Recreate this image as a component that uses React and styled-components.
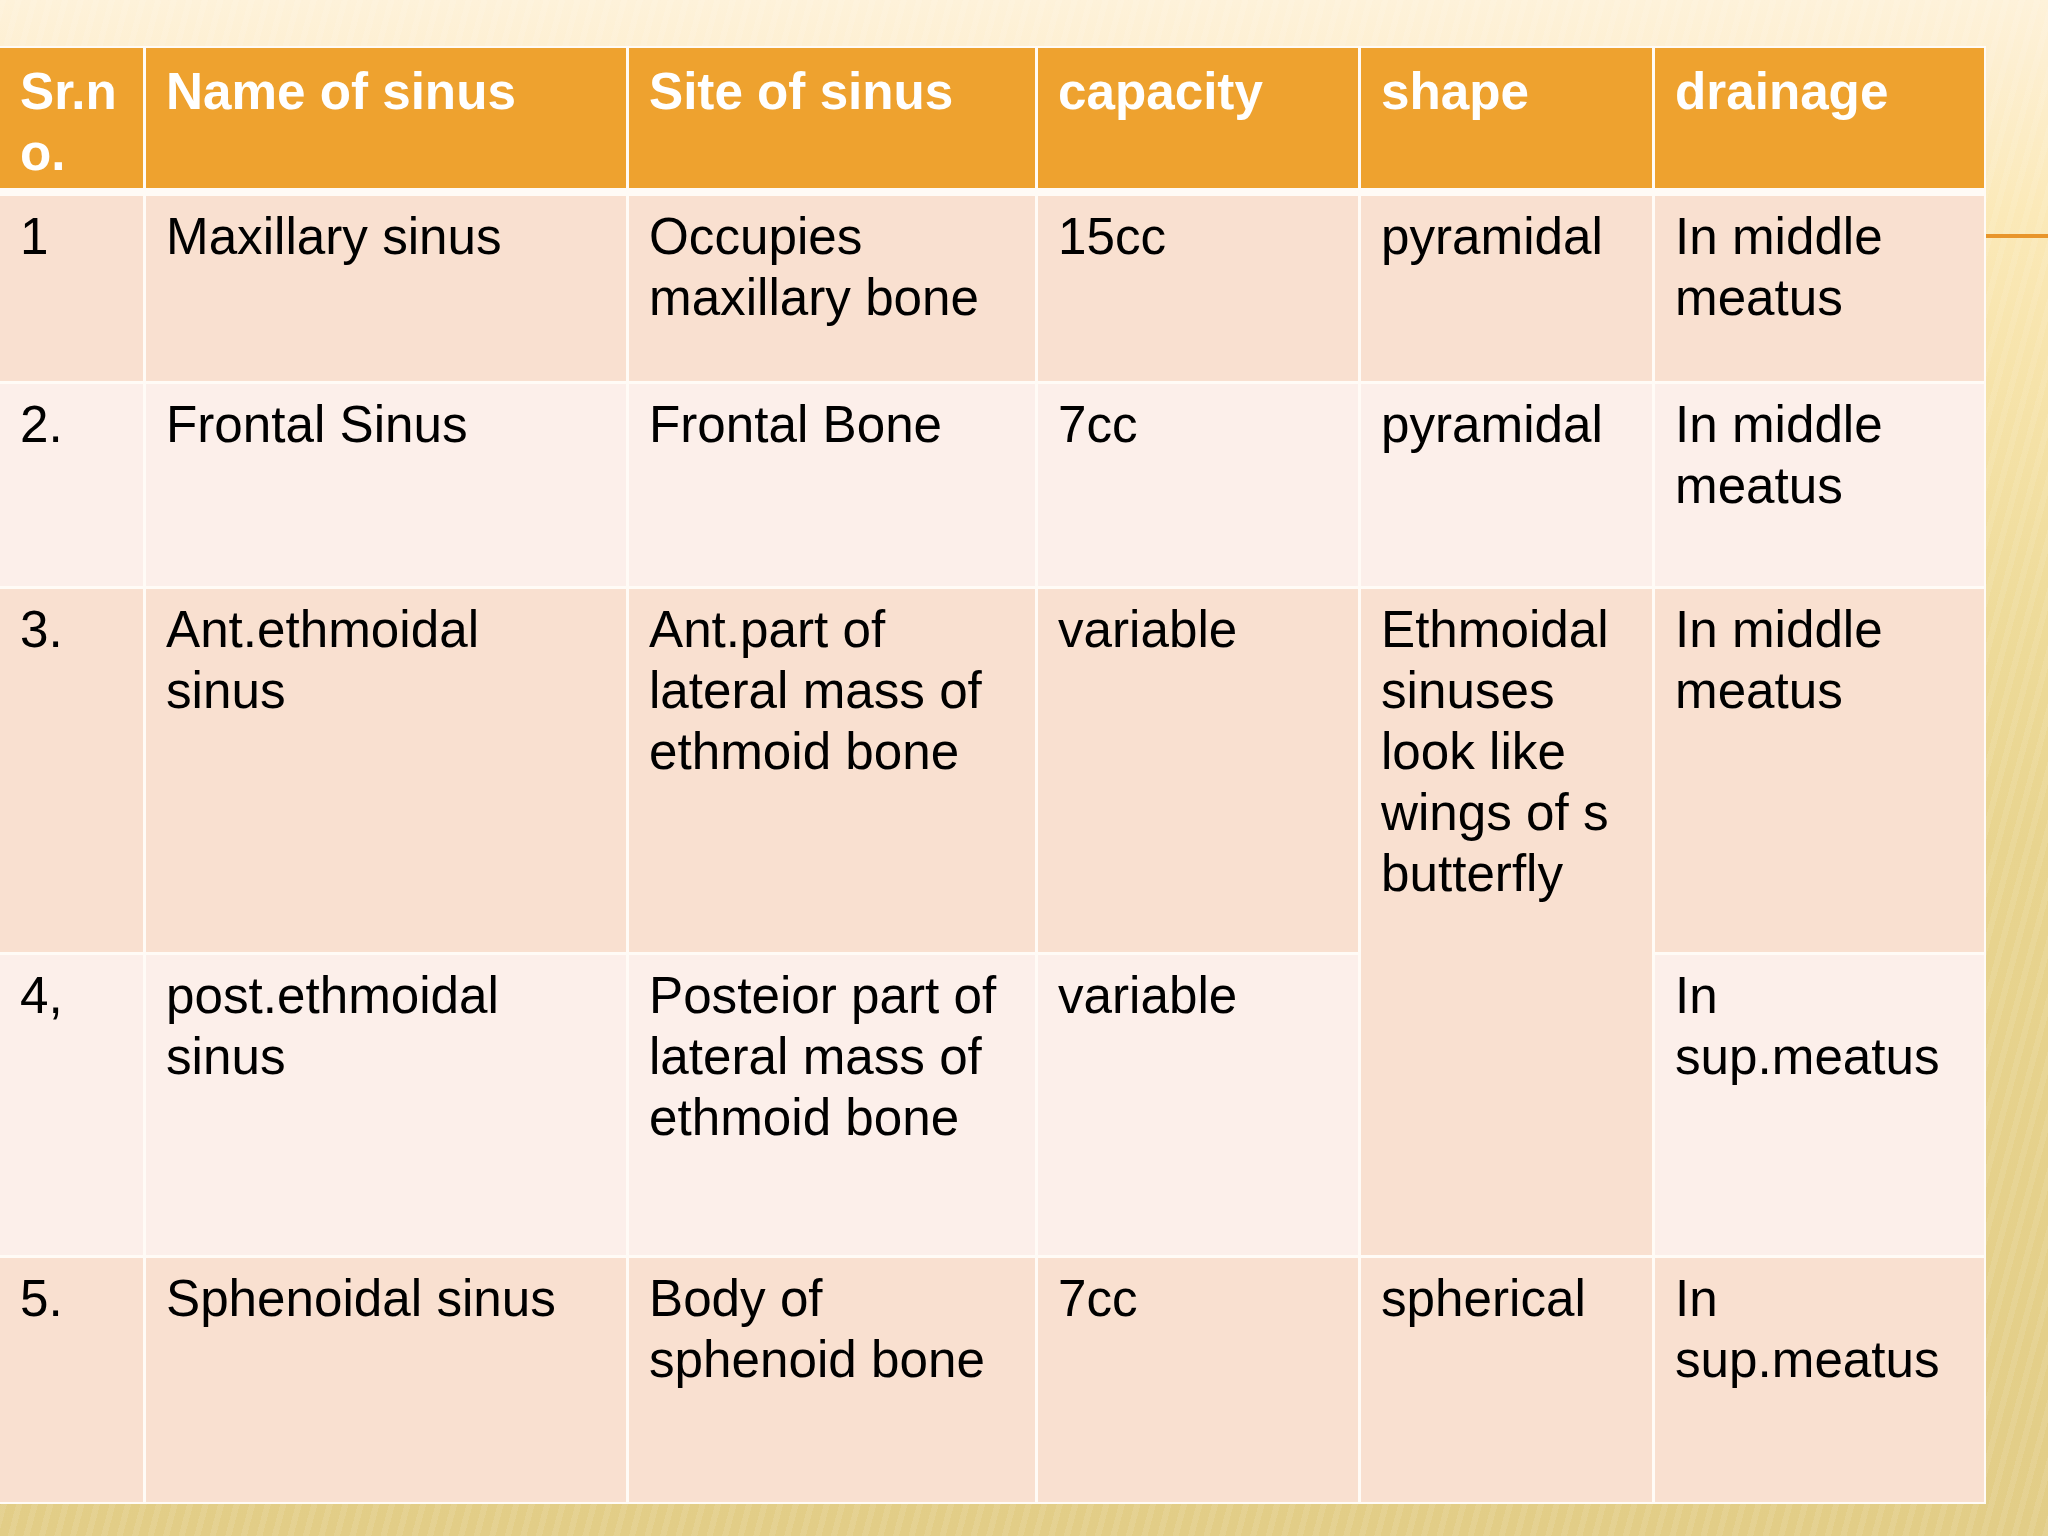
import styled, { createGlobalStyle } from "styled-components";

const GlobalStyle = createGlobalStyle`
  html, body {
    margin: 0;
    padding: 0;
  }
  body {
    font-family: "Liberation Sans", Arial, sans-serif;
  }
`;

const Slide = styled.div`
  width: 2048px;
  height: 1536px;
  display: flex;
  align-items: flex-start;
  padding-top: 46px;
  box-sizing: border-box;
  overflow: hidden;
  background:
    repeating-linear-gradient(
      105deg,
      rgba(255, 255, 255, 0.09) 0 6px,
      rgba(255, 255, 255, 0) 6px 15px
    ),
    linear-gradient(
      180deg,
      #fef2da 0%,
      #fdefd1 4%,
      #fbe9b8 14%,
      #f6e3aa 25%,
      #eedb9a 40%,
      #e8d48f 55%,
      #e2cd87 100%
    );
`;

const Table = styled.div`
  display: grid;
  grid-template-columns: 143px 480px 406px 320px 291px 329px;
  grid-template-rows: 145px 185px 202px 363px 300px 244px;
  gap: 3px;
  padding: 2px 2px 2px 0;
  background: #fffbf6;
  flex: none;
`;

const tones = {
  head: "#eea22f",
  odd: "#f9e0d0",
  even: "#fcefea",
};

const Cell = styled.div`
  background: ${(p) => tones[p.$tone]};
  grid-row: ${(p) => (p.$span ? `span ${p.$span}` : "auto")};
  padding: 10px 20px 0 20px;
  font-size: 51.2px;
  line-height: 61px;
  color: #000;
  overflow-wrap: anywhere;
`;

const HeadCell = styled(Cell)`
  color: #fff;
  font-weight: 700;
  margin-bottom: 5px;
  padding-top: 13px;
`;

const Gutter = styled.div`
  flex: 1;
  padding-top: 188px;
`;

const Rule = styled.div`
  height: 4px;
  background: #e8952b;
`;

const headers = [
  "Sr.no.",
  "Name of sinus",
  "Site of sinus",
  "capacity",
  "shape",
  "drainage",
];

const rows = [
  ["1", "Maxillary sinus", "Occupies maxillary bone", "15cc", "pyramidal", "In middle meatus"],
  ["2.", "Frontal Sinus", "Frontal Bone", "7cc", "pyramidal", "In middle meatus"],
  [
    "3.",
    "Ant.ethmoidal sinus",
    "Ant.part of lateral mass of ethmoid bone",
    "variable",
    { text: "Ethmoidal sinuses look like wings of s butterfly", span: 2 },
    "In middle meatus",
  ],
  ["4,", "post.ethmoidal sinus", "Posteior part of lateral mass of ethmoid bone", "variable", "In sup.meatus"],
  ["5.", "Sphenoidal sinus", "Body of sphenoid bone", "7cc", "spherical", "In sup.meatus"],
];

export default function App() {
  return (
    <>
      <GlobalStyle />
      <Slide>
        <Table>
          {headers.map((h) => (
            <HeadCell key={h} $tone="head">
              {h}
            </HeadCell>
          ))}
          {rows.map((row, r) =>
            row.map((cell, c) => {
              const tone = r % 2 === 0 ? "odd" : "even";
              if (typeof cell === "object") {
                return (
                  <Cell key={`${r}-${c}`} $tone={tone} $span={cell.span}>
                    {cell.text}
                  </Cell>
                );
              }
              return (
                <Cell key={`${r}-${c}`} $tone={tone}>
                  {cell}
                </Cell>
              );
            })
          )}
        </Table>
        <Gutter>
          <Rule />
        </Gutter>
      </Slide>
    </>
  );
}
